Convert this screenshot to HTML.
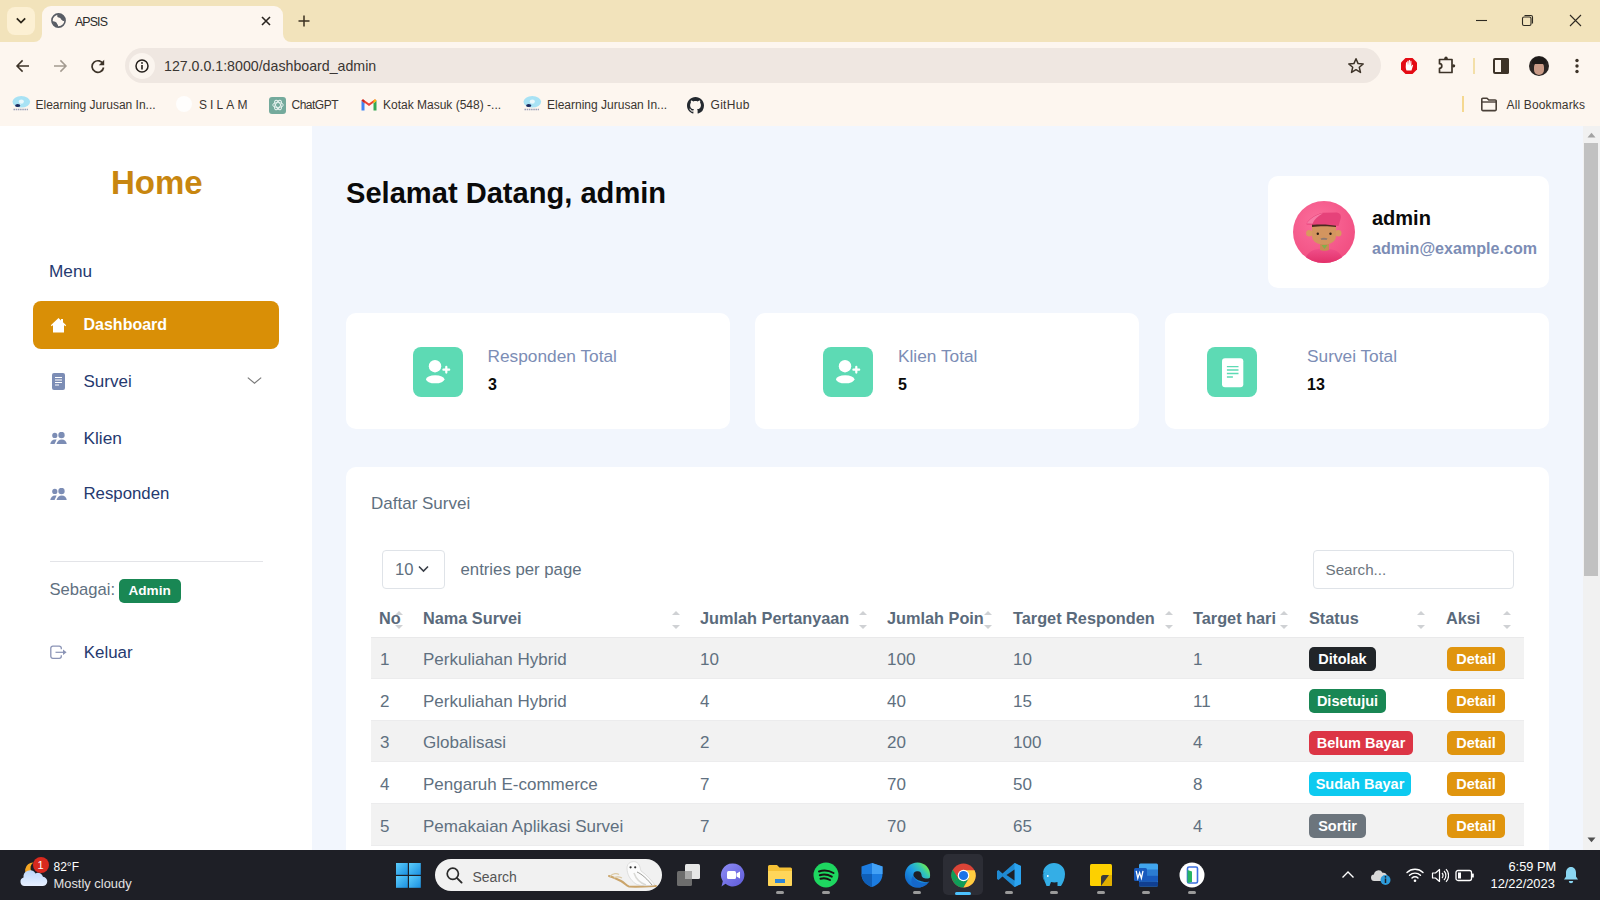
<!DOCTYPE html>
<html><head><meta charset="utf-8">
<style>
*{box-sizing:border-box;margin:0;padding:0}
html,body{width:1600px;height:900px;overflow:hidden;font-family:"Liberation Sans",sans-serif;background:#fdf6ef}
.a{position:absolute}
svg{display:block}
/* chrome */
#tabstrip{left:0;top:0;width:1600px;height:42px;background:#f2e3bb}
#toolbar{left:0;top:42px;width:1600px;height:46px;background:#fdf6ef}
#bookmarks{left:0;top:88px;width:1600px;height:38px;background:#fdf6ef}
.bm{font-size:12px;line-height:1;color:#3a3530;top:98.6px;white-space:nowrap}
/* page */
#page{left:0;top:126px;width:1600px;height:724px;background:#f2f6fd;overflow:hidden}
#sidebar{left:0;top:0;width:312px;height:724px;background:#fff}
.t{line-height:1;white-space:nowrap}
.th{font-size:16.3px;font-weight:bold;color:#5a6a7b}
.td{font-size:17px;color:#607080}
.bdg{height:24px;border-radius:5px;color:#fff;font-weight:bold;font-size:14.5px;line-height:24px;text-align:center;white-space:nowrap}
.srt{width:0;height:0;border-left:4px solid transparent;border-right:4px solid transparent;border-bottom:4px solid #cfd1d4}
.srt2{width:0;height:0;border-left:4px solid transparent;border-right:4px solid transparent;border-top:4px solid #cfd1d4}
.card{background:#fff;border-radius:10px}
#taskbar{left:0;top:850px;width:1600px;height:50px;background:#1e1f26}
</style></head><body>
<!-- TAB STRIP -->
<div id="tabstrip" class="a">
  <div class="a" style="left:42px;top:6px;width:241px;height:36px;background:#fdf6ef;border-radius:9px 9px 0 0"></div>
  <div class="a" style="left:34px;top:34px;width:8px;height:8px;background:#fdf6ef"></div>
  <div class="a" style="left:26px;top:26px;width:16px;height:16px;background:#f2e3bb;border-radius:0 0 8px 0"></div>
  <div class="a" style="left:283px;top:34px;width:8px;height:8px;background:#fdf6ef"></div>
  <div class="a" style="left:283px;top:26px;width:16px;height:16px;background:#f2e3bb;border-radius:0 0 0 8px"></div>
  <div class="a" style="left:7px;top:7px;width:28px;height:28px;border-radius:8px;background:#fcf0d3"></div>
  <svg class="a" style="left:14px;top:14px" width="14" height="14" viewBox="0 0 14 14"><path d="M2.8 4.4L7 8.6L11.2 4.4" fill="none" stroke="#2a2418" stroke-width="1.7"/></svg>
  <svg class="a" style="left:51px;top:13px" width="15" height="15" viewBox="0 0 15 15"><circle cx="7.5" cy="7.5" r="6.6" fill="none" stroke="#595d65" stroke-width="1.6"/><path d="M6.5 1.2C8.5 1 11.5 1.8 13 3.5C13.8 5 13.9 6.8 13.6 8C12.5 8.3 11.3 7.6 10.5 6.8C9.5 6 9.8 5 8.5 4.8C7.4 4.6 6.2 4 6.2 3C6.2 2.2 6.5 1.6 6.5 1.2Z" fill="#595d65"/><path d="M1.2 8C2.5 8.2 4 8.5 5 9.3C6 10 6 11.2 6.8 11.8C7.3 12.3 7 13.3 6.5 14C4 13.5 2 11.5 1.2 8Z" fill="#595d65"/></svg>
  <div class="a t" style="left:75px;top:16px;font-size:12.4px;letter-spacing:-0.9px;color:#2b2b2b">APSIS</div>
  <svg class="a" style="left:260px;top:15px" width="12" height="12" viewBox="0 0 12 12"><path d="M2 2L10 10M10 2L2 10" stroke="#2a2520" stroke-width="1.6"/></svg>
  <svg class="a" style="left:298px;top:15px" width="12" height="12" viewBox="0 0 12 12"><path d="M6 0.5V11.5M0.5 6H11.5" stroke="#3b3020" stroke-width="1.5"/></svg>
  <svg class="a" style="left:1475px;top:14px" width="13" height="13" viewBox="0 0 13 13"><path d="M1 6.5H12" stroke="#2e2a22" stroke-width="1.1"/></svg>
  <svg class="a" style="left:1521px;top:14px" width="13" height="13" viewBox="0 0 13 13"><rect x="1.5" y="3" width="8.5" height="8.5" rx="1.5" fill="none" stroke="#2e2a22" stroke-width="1.1"/><path d="M3.5 1.5H10a1.5 1.5 0 0 1 1.5 1.5V9.5" fill="none" stroke="#2e2a22" stroke-width="1.1"/></svg>
  <svg class="a" style="left:1569px;top:14px" width="13" height="13" viewBox="0 0 13 13"><path d="M1 1L12 12M12 1L1 12" stroke="#2e2a22" stroke-width="1.1"/></svg>
</div>
<!-- TOOLBAR -->
<div id="toolbar" class="a">
  <svg class="a" style="left:14px;top:16px" width="16" height="16" viewBox="0 0 16 16"><path d="M15 8H3.2M8.6 2.4L3 8L8.6 13.6" fill="none" stroke="#3d3328" stroke-width="1.5"/></svg>
  <svg class="a" style="left:52px;top:16px" width="16" height="16" viewBox="0 0 16 16"><path d="M2 8H13.8M8.4 2.4L14 8L8.4 13.6" fill="none" stroke="#a39a90" stroke-width="1.5"/></svg>
  <svg class="a" style="left:90px;top:16px" width="16" height="16" viewBox="0 0 16 16"><path d="M13.3 6.5A5.8 5.8 0 1 0 13.6 9.5" fill="none" stroke="#3d3328" stroke-width="1.7"/><path d="M14.2 1.8V7.2H8.8Z" fill="#3d3328"/></svg>
  <div class="a" style="left:125px;top:6px;width:1256px;height:35px;border-radius:17.5px;background:#efe7e1"></div>
  <div class="a" style="left:129px;top:11px;width:26px;height:26px;border-radius:13px;background:#fbf5ef"></div>
  <svg class="a" style="left:135px;top:17px" width="14" height="14" viewBox="0 0 14 14"><circle cx="7" cy="7" r="6" fill="none" stroke="#231e1a" stroke-width="1.5"/><path d="M7 6V10.5" stroke="#231e1a" stroke-width="1.6"/><circle cx="7" cy="4" r="0.9" fill="#231e1a"/></svg>
  <div class="a t" style="left:164px;top:17.2px;font-size:14.2px;color:#3a3633">127.0.0.1:8000/dashboard_admin</div>
  <svg class="a" style="left:1347px;top:15px" width="18" height="18" viewBox="0 0 18 18"><path d="M9 1.8L11.1 6.6L16.2 7L12.3 10.3L13.5 15.4L9 12.7L4.5 15.4L5.7 10.3L1.8 7L6.9 6.6Z" fill="none" stroke="#3d3328" stroke-width="1.5" stroke-linejoin="round"/></svg>
  <svg class="a" style="left:1400px;top:15px" width="18" height="18" viewBox="0 0 18 18"><path d="M5.5 1H12.5L17 5.5V12.5L12.5 17H5.5L1 12.5V5.5Z" fill="#e40b14"/><path d="M6.5 13.5C5.8 12 5.6 10 5.8 8.5L6 5.5C6.1 5 7 5 7 5.5V8.5L7.4 4C7.5 3.5 8.4 3.5 8.4 4V8.3L8.9 3.4C9 2.9 9.9 2.9 9.9 3.4V8.3L10.4 4.2C10.5 3.7 11.4 3.7 11.4 4.2V9.5L12.2 8C12.5 7.5 13.3 7.8 13.1 8.3L11.5 13.5Z" fill="#fff"/></svg>
  
  <div class="a" style="left:1473px;top:16px;width:2px;height:16px;background:#f3dfa8"></div>
  <svg class="a" style="left:1492px;top:57px;display:none" width="1" height="1"></svg>
  <div class="a" style="left:1493px;top:16px;width:16px;height:16px;border:2px solid #3d3328;border-radius:2px"></div>
  <div class="a" style="left:1501px;top:16px;width:8px;height:16px;background:#3d3328;border-radius:0 2px 2px 0"></div>
  <div class="a" style="left:1529px;top:14px;width:20px;height:20px;border-radius:10px;background:#2a2523;overflow:hidden"><div class="a" style="left:5px;top:6px;width:10px;height:13px;border-radius:5px;background:#c99a86"></div><div class="a" style="left:3px;top:1px;width:14px;height:7px;border-radius:7px 7px 2px 2px;background:#1e1a18"></div></div>
  <svg class="a" style="left:1573px;top:15px" width="8" height="18" viewBox="0 0 8 18"><circle cx="4" cy="3.5" r="1.7" fill="#3d3328"/><circle cx="4" cy="9" r="1.7" fill="#3d3328"/><circle cx="4" cy="14.5" r="1.7" fill="#3d3328"/></svg>
</div>
<svg class="a" style="left:1437px;top:55px" width="20" height="20" viewBox="0 0 20 20"><path d="M2.5 4.5H15V17.5H2.5V13.3A2.3 2.3 0 0 0 2.5 8.7Z" fill="none" stroke="#3d3328" stroke-width="1.7" stroke-linejoin="round"/><circle cx="9" cy="3.3" r="1.7" fill="#3d3328"/><circle cx="16.6" cy="10.8" r="1.6" fill="#3d3328"/></svg>
<!-- BOOKMARKS -->
<div id="bookmarks" class="a"></div>
<div class="a bm" style="left:35.5px">Elearning Jurusan In...</div>
<div class="a bm" style="left:199px;letter-spacing:3.1px">SILAM</div>
<div class="a bm" style="left:291.5px;letter-spacing:-0.5px">ChatGPT</div>
<div class="a bm" style="left:383px">Kotak Masuk (548) -...</div>
<div class="a bm" style="left:547px">Elearning Jurusan In...</div>
<div class="a bm" style="left:710.5px;letter-spacing:0.3px">GitHub</div>
<div class="a bm" style="left:1506.5px;letter-spacing:0.15px">All Bookmarks</div>
<svg class="a" style="left:11px;top:95px" width="20" height="18" viewBox="0 0 20 18"><ellipse cx="10.3" cy="6.8" rx="8.8" ry="5.8" fill="#a8e2f4"/><ellipse cx="10.3" cy="6.6" rx="2.6" ry="2.2" fill="#eaf8fc"/><path d="M9.5 8.5C10 10 9 11.8 7 11.5L8.5 10.5Z" fill="#eaf8fc"/><ellipse cx="6.7" cy="10.6" rx="2.6" ry="1.5" fill="#1b2a5e"/><path d="M2.5 14.5H17" stroke="#9aa0b8" stroke-width="1.3" stroke-dasharray="1.5 0.7"/></svg>
<div class="a" style="left:176px;top:96px;width:16px;height:16px;border-radius:8px;background:#fff;opacity:.85"></div>
<div class="a" style="left:269px;top:96.5px;width:17px;height:17px;border-radius:3px;background:#74aa9c"></div>
<svg class="a" style="left:270.5px;top:98px" width="14" height="14" viewBox="0 0 14 14"><g fill="none" stroke="#e8f3f0" stroke-width="0.9"><ellipse cx="7" cy="7" rx="5.2" ry="2.4"/><ellipse cx="7" cy="7" rx="5.2" ry="2.4" transform="rotate(60 7 7)"/><ellipse cx="7" cy="7" rx="5.2" ry="2.4" transform="rotate(120 7 7)"/></g></svg>
<svg class="a" style="left:361px;top:99px" width="16" height="12" viewBox="0 0 16 12"><path d="M0.5 1.5V11.5H3.5V4.5Z" fill="#4285f4"/><path d="M12.5 4.5V11.5H15.5V1.5Z" fill="#34a853"/><path d="M0.5 1.5L8 7L15.5 1.5L14 0.3L8 4.6L2 0.3Z" fill="#ea4335"/><path d="M12.5 4.5L15.5 1.5L14 0.3L12.5 1.4Z" fill="#fbbc04"/><path d="M3.5 4.5L0.5 1.5L2 0.3L3.5 1.4Z" fill="#c5221f"/></svg>
<svg class="a" style="left:522px;top:95px" width="20" height="18" viewBox="0 0 20 18"><ellipse cx="10.3" cy="6.8" rx="8.8" ry="5.8" fill="#a8e2f4"/><ellipse cx="10.3" cy="6.6" rx="2.6" ry="2.2" fill="#eaf8fc"/><ellipse cx="6.7" cy="10.6" rx="2.6" ry="1.5" fill="#1b2a5e"/><path d="M2.5 14.5H17" stroke="#9aa0b8" stroke-width="1.3" stroke-dasharray="1.5 0.7"/></svg>
<svg class="a" style="left:687px;top:96.5px" width="17" height="17" viewBox="0 0 16 16"><path fill="#24292f" d="M8 0C3.58 0 0 3.58 0 8c0 3.54 2.29 6.53 5.47 7.59.4.07.55-.17.55-.38 0-.19-.01-.82-.01-1.49-2.01.37-2.53-.49-2.69-.94-.09-.23-.48-.94-.82-1.13-.28-.15-.68-.52-.01-.53.63-.01 1.08.58 1.23.82.72 1.21 1.87.87 2.33.66.07-.52.28-.87.51-1.07-1.78-.2-3.640-.89-3.64-3.95 0-.87.31-1.59.82-2.15-.08-.2-.36-1.02.08-2.12 0 0 .67-.21 2.2.82.64-.18 1.320-.27 2-.27.68 0 1.36.09 2 .27 1.53-1.04 2.2-.82 2.2-.82.44 1.1.16 1.92.08 2.12.51.56.82 1.27.82 2.15 0 3.070-1.87 3.75-3.65 3.95.29.25.54.73.54 1.48 0 1.07-.01 1.93-.01 2.2 0 .21.15.46.55.38A8.013 8.013 0 0016 8c0-4.42-3.58-8-8-8z"/></svg>
<div class="a" style="left:1462px;top:96px;width:2px;height:16px;background:#f5d890"></div>
<svg class="a" style="left:1480px;top:97px" width="18" height="15" viewBox="0 0 18 15"><path d="M1.8 2.2a1 1 0 0 1 1-1H7L8.8 3H15.2a1 1 0 0 1 1 1V12.6a1 1 0 0 1-1 1H2.8a1 1 0 0 1-1-1Z" fill="none" stroke="#4a4038" stroke-width="1.6" stroke-linejoin="round"/><path d="M1.8 5H16.2" stroke="#4a4038" stroke-width="1.4"/></svg>
<!-- PAGE -->
<div id="page" class="a"></div>
<div id="sidebar" class="a" style="left:0;top:126px;width:312px;height:724px;background:#fff"></div>
<div class="a t" style="left:111px;top:166.3px;font-size:33px;font-weight:bold;color:#c8860f">Home</div>
<div class="a t" style="left:49px;top:262.8px;font-size:17.2px;color:#25396f">Menu</div>
<div class="a" style="left:33px;top:301px;width:246px;height:48px;border-radius:8px;background:#d98f06"></div>
<svg class="a" style="left:50px;top:317px" width="17" height="16" viewBox="0 0 17 16"><path d="M8.5 1L0.8 8.2L1.8 9.2L3 8.1V15.5H14V8.1L15.2 9.2L16.2 8.2L13 5.2V2H11V3.4Z" fill="#fff"/></svg>
<div class="a t" style="left:83.5px;top:316.5px;font-size:16px;font-weight:bold;color:#fff">Dashboard</div>
<svg class="a" style="left:52px;top:373px" width="13" height="17" viewBox="0 0 13 17"><rect x="0" y="0" width="13" height="17" rx="2" fill="#7c8db5"/><path d="M3 4.5H10M3 7H10M3 9.5H10M3 12H7" stroke="#fff" stroke-width="1.1"/></svg>
<div class="a t" style="left:83.5px;top:372.8px;font-size:17px;color:#25396f">Survei</div>
<svg class="a" style="left:247px;top:377px" width="15" height="7" viewBox="0 0 15 7"><path d="M0.8 0.6L7.5 6.2L14.2 0.6" fill="none" stroke="#7a7a7a" stroke-width="1.2"/></svg>
<svg class="a" style="left:50px;top:432px" width="17" height="12" viewBox="0 0 17 12"><circle cx="4.8" cy="3.4" r="2.6" fill="#7c8db5"/><circle cx="11.5" cy="3" r="3.2" fill="#7c8db5"/><path d="M0.2 12.2C0.5 9.5 2.5 7.4 5 7.4H6.6L4.5 12.2Z" fill="#7c8db5"/><path d="M6.4 12.2C7 9.3 9 7.4 11.8 7.4C14.6 7.4 16.5 9.3 16.8 12.2Z" fill="#7c8db5"/></svg>
<div class="a t" style="left:83.5px;top:430.4px;font-size:17.3px;color:#25396f">Klien</div>
<svg class="a" style="left:50px;top:488px" width="17" height="12" viewBox="0 0 17 12"><circle cx="4.8" cy="3.4" r="2.6" fill="#7c8db5"/><circle cx="11.5" cy="3" r="3.2" fill="#7c8db5"/><path d="M0.2 12.2C0.5 9.5 2.5 7.4 5 7.4H6.6L4.5 12.2Z" fill="#7c8db5"/><path d="M6.4 12.2C7 9.3 9 7.4 11.8 7.4C14.6 7.4 16.5 9.3 16.8 12.2Z" fill="#7c8db5"/></svg>
<div class="a t" style="left:83.5px;top:486.3px;font-size:16.8px;color:#25396f">Responden</div>
<div class="a" style="left:50px;top:561px;width:213px;height:1px;background:#e3e4e8"></div>
<div class="a t" style="left:49.5px;top:582.3px;font-size:16.6px;color:#607080">Sebagai:</div>
<div class="a" style="left:119px;top:579px;width:62px;height:24px;border-radius:5px;background:#198754"></div>
<div class="a t" style="left:128.5px;top:584.4px;font-size:13.6px;font-weight:bold;color:#fff">Admin</div>
<svg class="a" style="left:50px;top:645px" width="17" height="14" viewBox="0 0 17 14"><path d="M11.3 4.3V3.2A2 2 0 0 0 9.3 1.2H2.8A2 2 0 0 0 0.8 3.2V11.3A2 2 0 0 0 2.8 13.3H9.3A2 2 0 0 0 11.3 11.3V10.2" fill="none" stroke="#8a93b5" stroke-width="1.3"/><path d="M5.5 7.3H13.5" stroke="#8a93b5" stroke-width="1.2"/><path d="M13 4.6L16.6 7.3L13 10Z" fill="#8a93b5"/></svg>
<div class="a t" style="left:83.8px;top:644.8px;font-size:16.9px;color:#25396f">Keluar</div>

<div class="a t" style="left:346px;top:179.3px;font-size:29.1px;font-weight:bold;color:#0a0a0a">Selamat Datang, admin</div>
<div class="a card" style="left:1268px;top:176px;width:281px;height:112px"></div>
<div class="a t" style="left:1372px;top:207.8px;font-size:20px;font-weight:bold;color:#0a0a0a">admin</div>
<div class="a t" style="left:1372px;top:240px;font-size:16.1px;font-weight:bold;color:#7c8db5">admin@example.com</div>

<div class="a card" style="left:346px;top:313px;width:384px;height:116px"></div>
<div class="a card" style="left:755px;top:313px;width:384px;height:116px"></div>
<div class="a card" style="left:1165px;top:313px;width:384px;height:116px"></div>
<div class="a" style="left:413px;top:347px;width:50px;height:50px;border-radius:8px;background:#5ddab4"></div>
<div class="a" style="left:823px;top:347px;width:50px;height:50px;border-radius:8px;background:#5ddab4"></div>
<div class="a" style="left:1207px;top:347px;width:50px;height:50px;border-radius:8px;background:#5ddab4"></div>
<svg class="a" style="left:413px;top:347px" width="50" height="50" viewBox="0 0 50 50"><circle cx="22" cy="19.2" r="6.2" fill="#fff"/><ellipse cx="22.2" cy="32.3" rx="9.2" ry="4" fill="#fff"/><path d="M33.3 19.8V25.6M30.4 22.7H36.2" stroke="#fff" stroke-width="2.2" stroke-linecap="round"/></svg>
<svg class="a" style="left:823px;top:347px" width="50" height="50" viewBox="0 0 50 50"><circle cx="22" cy="19.2" r="6.2" fill="#fff"/><ellipse cx="22.2" cy="32.3" rx="9.2" ry="4" fill="#fff"/><path d="M33.3 19.8V25.6M30.4 22.7H36.2" stroke="#fff" stroke-width="2.2" stroke-linecap="round"/></svg>
<svg class="a" style="left:1207px;top:347px" width="50" height="50" viewBox="0 0 50 50"><rect x="15" y="11.3" width="21.3" height="29" rx="3" fill="#fff"/><path d="M19.9 19.6H31.5M19.9 23H31.5M19.9 26.5H31.5M19.9 30H25.9" stroke="#5ddab4" stroke-width="1.3"/></svg>
<svg class="a" style="left:1293px;top:201px" width="62" height="62" viewBox="0 0 62 62"><defs><clipPath id="avc"><circle cx="31" cy="31" r="31"/></clipPath><radialGradient id="avg" cx="0.4" cy="0.35" r="0.75"><stop offset="0" stop-color="#fb6f9c"/><stop offset="1" stop-color="#f04b7f"/></radialGradient><linearGradient id="bod" x1="0" y1="0" x2="0" y2="1"><stop offset="0" stop-color="#f0508a"/><stop offset="1" stop-color="#e2306a"/></linearGradient></defs><g clip-path="url(#avc)"><rect width="62" height="62" fill="url(#avg)"/><path d="M12 62C12 52 19 47.5 31 47.5C43 47.5 50 52 50 62Z" fill="url(#bod)"/><path d="M27 38H36V49C34 50 29 50 27 49Z" fill="#c98a55"/><path d="M28.5 44L31.5 48L34.5 44Z" fill="#7fb04a"/><circle cx="16.3" cy="32.3" r="3.2" fill="#d8995f"/><circle cx="45.3" cy="32.3" r="3.2" fill="#d8995f"/><path d="M19 24H43V35C43 40 38 43.5 31 43.5C24 43.5 19 40 19 35Z" fill="#d3955f"/><path d="M19 23H43V26C36 25 26 25 19 26Z" fill="#4a2a20"/><circle cx="24.8" cy="32.8" r="1.2" fill="#2a1a14"/><circle cx="37.5" cy="32.8" r="1.2" fill="#2a1a14"/><path d="M27.5 37.5C29.5 36.5 32.5 36.5 34.5 37.5L33.5 39C32 38.5 30 38.5 28.5 39Z" fill="#8d7a70"/><path d="M13.6 22.2C17 17 23 13 30 11.7L44 11.5C47 12 48.3 14 47.8 17L45.5 25C38 23.5 28 23 20.5 23.7L13.6 23.6Z" fill="#e6427a"/><path d="M13.6 22.5C17 17.5 23 13.5 30 12.2C25 15 21 18.5 19.5 22.8Z" fill="#f77aa5"/></g></svg>
<div class="a t" style="left:487.5px;top:348.2px;font-size:17.3px;color:#7c8db5">Responden Total</div>
<div class="a t" style="left:898px;top:348.2px;font-size:17.3px;color:#7c8db5">Klien Total</div>
<div class="a t" style="left:1307px;top:348.2px;font-size:17.3px;color:#7c8db5">Survei Total</div>
<div class="a t" style="left:488px;top:377.3px;font-size:16px;font-weight:bold;color:#0a0a0a">3</div>
<div class="a t" style="left:898px;top:377.3px;font-size:16px;font-weight:bold;color:#0a0a0a">5</div>
<div class="a t" style="left:1307px;top:377.3px;font-size:16px;font-weight:bold;color:#0a0a0a">13</div>

<div class="a card" style="left:346px;top:467px;width:1203px;height:500px"></div>
<div class="a t" style="left:371px;top:495.2px;font-size:17px;color:#607080">Daftar Survei</div>
<div class="a" style="left:382px;top:550px;width:63px;height:39px;border:1px solid #dfe3e8;border-radius:4px"></div>
<div class="a t" style="left:395px;top:562.4px;font-size:16.6px;color:#607080">10</div>
<svg class="a" style="left:418px;top:565px" width="11" height="8" viewBox="0 0 11 8"><path d="M1 1.5L5.5 6L10 1.5" fill="none" stroke="#3a3f48" stroke-width="1.6"/></svg>
<div class="a t" style="left:460.5px;top:562.4px;font-size:16.75px;color:#607080">entries per page</div>
<div class="a" style="left:1313px;top:550px;width:201px;height:39px;border:1px solid #dfe3e8;border-radius:4px"></div>
<div class="a t" style="left:1325.5px;top:561.6px;font-size:15.2px;color:#6c757d">Search...</div>
<!-- TABLE -->
<div class="a t th" style="left:379px;top:609.6px">No</div>
<div class="a srt" style="left:395px;top:611px"></div><div class="a srt2" style="left:395px;top:625px"></div>
<div class="a t th" style="left:423px;top:609.6px">Nama Survei</div>
<div class="a srt" style="left:672px;top:611px"></div><div class="a srt2" style="left:672px;top:625px"></div>
<div class="a t th" style="left:700px;top:609.6px">Jumlah Pertanyaan</div>
<div class="a srt" style="left:859px;top:611px"></div><div class="a srt2" style="left:859px;top:625px"></div>
<div class="a t th" style="left:887px;top:609.6px">Jumlah Poin</div>
<div class="a srt" style="left:984px;top:611px"></div><div class="a srt2" style="left:984px;top:625px"></div>
<div class="a t th" style="left:1013px;top:609.6px">Target Responden</div>
<div class="a srt" style="left:1165px;top:611px"></div><div class="a srt2" style="left:1165px;top:625px"></div>
<div class="a t th" style="left:1193px;top:609.6px">Target hari</div>
<div class="a srt" style="left:1280px;top:611px"></div><div class="a srt2" style="left:1280px;top:625px"></div>
<div class="a t th" style="left:1309px;top:609.6px">Status</div>
<div class="a srt" style="left:1417px;top:611px"></div><div class="a srt2" style="left:1417px;top:625px"></div>
<div class="a t th" style="left:1446px;top:609.6px">Aksi</div>
<div class="a srt" style="left:1503px;top:611px"></div><div class="a srt2" style="left:1503px;top:625px"></div>

<div class="a" style="left:371px;top:637.0px;width:1153px;height:41.8px;background:#f2f2f2"></div>
<div class="a t td" style="left:380px;top:650.7px">1</div>
<div class="a t td" style="left:423px;top:650.7px">Perkuliahan Hybrid</div>
<div class="a t td" style="left:700px;top:650.7px">10</div>
<div class="a t td" style="left:887px;top:650.7px">100</div>
<div class="a t td" style="left:1013px;top:650.7px">10</div>
<div class="a t td" style="left:1193px;top:650.7px">1</div>
<div class="a bdg" style="left:1309px;top:647.0px;width:67px;background:#212529">Ditolak</div>
<div class="a bdg" style="left:1447px;top:647.0px;width:58px;background:#e0950e">Detail</div>
<div class="a t td" style="left:380px;top:692.5px">2</div>
<div class="a t td" style="left:423px;top:692.5px">Perkuliahan Hybrid</div>
<div class="a t td" style="left:700px;top:692.5px">4</div>
<div class="a t td" style="left:887px;top:692.5px">40</div>
<div class="a t td" style="left:1013px;top:692.5px">15</div>
<div class="a t td" style="left:1193px;top:692.5px">11</div>
<div class="a bdg" style="left:1309px;top:688.8px;width:77px;background:#198754">Disetujui</div>
<div class="a bdg" style="left:1447px;top:688.8px;width:58px;background:#e0950e">Detail</div>
<div class="a" style="left:371px;top:720.6px;width:1153px;height:41.8px;background:#f2f2f2"></div>
<div class="a t td" style="left:380px;top:734.3px">3</div>
<div class="a t td" style="left:423px;top:734.3px">Globalisasi</div>
<div class="a t td" style="left:700px;top:734.3px">2</div>
<div class="a t td" style="left:887px;top:734.3px">20</div>
<div class="a t td" style="left:1013px;top:734.3px">100</div>
<div class="a t td" style="left:1193px;top:734.3px">4</div>
<div class="a bdg" style="left:1309px;top:730.6px;width:104px;background:#dc3545">Belum Bayar</div>
<div class="a bdg" style="left:1447px;top:730.6px;width:58px;background:#e0950e">Detail</div>
<div class="a t td" style="left:380px;top:776.1px">4</div>
<div class="a t td" style="left:423px;top:776.1px">Pengaruh E-commerce</div>
<div class="a t td" style="left:700px;top:776.1px">7</div>
<div class="a t td" style="left:887px;top:776.1px">70</div>
<div class="a t td" style="left:1013px;top:776.1px">50</div>
<div class="a t td" style="left:1193px;top:776.1px">8</div>
<div class="a bdg" style="left:1309px;top:772.4px;width:102px;background:#0dcaf0">Sudah Bayar</div>
<div class="a bdg" style="left:1447px;top:772.4px;width:58px;background:#e0950e">Detail</div>
<div class="a" style="left:371px;top:804.2px;width:1153px;height:41.8px;background:#f2f2f2"></div>
<div class="a t td" style="left:380px;top:817.9px">5</div>
<div class="a t td" style="left:423px;top:817.9px">Pemakaian Aplikasi Survei</div>
<div class="a t td" style="left:700px;top:817.9px">7</div>
<div class="a t td" style="left:887px;top:817.9px">70</div>
<div class="a t td" style="left:1013px;top:817.9px">65</div>
<div class="a t td" style="left:1193px;top:817.9px">4</div>
<div class="a bdg" style="left:1309px;top:814.2px;width:57px;background:#6c757d">Sortir</div>
<div class="a bdg" style="left:1447px;top:814.2px;width:58px;background:#e0950e">Detail</div>

<div class="a" style="left:371px;top:637px;width:1153px;height:1px;background:#e9e9ea"></div>
<div class="a" style="left:371px;top:677.8px;width:1153px;height:1px;background:#ececed"></div>
<div class="a" style="left:371px;top:719.6px;width:1153px;height:1px;background:#ececed"></div>
<div class="a" style="left:371px;top:761.4px;width:1153px;height:1px;background:#ececed"></div>
<div class="a" style="left:371px;top:803.2px;width:1153px;height:1px;background:#ececed"></div>
<div class="a" style="left:371px;top:845.0px;width:1153px;height:1px;background:#ececed"></div>
<!-- SCROLLBAR -->
<div class="a" style="left:1583px;top:126px;width:17px;height:724px;background:#f1f1f1"></div>
<div class="a" style="left:1584px;top:143px;width:14px;height:433px;background:#c1c1c1"></div>
<svg class="a" style="left:1587px;top:132px" width="9" height="6" viewBox="0 0 9 6"><path d="M0.5 5.5L4.5 0.8L8.5 5.5Z" fill="#a3a3a3"/></svg>
<svg class="a" style="left:1587px;top:837px" width="9" height="6" viewBox="0 0 9 6"><path d="M0.5 0.5L4.5 5.2L8.5 0.5Z" fill="#505050"/></svg>
<!-- TASKBAR -->
<div id="taskbar" class="a"></div>
<!-- weather -->
<svg class="a" style="left:18px;top:858px" width="32" height="32" viewBox="0 0 32 32"><path d="M15.5 4.5A8 8 0 1 0 22.5 15.5A6.5 6.5 0 0 1 15.5 4.5Z" fill="#f5a623"/><defs><linearGradient id="cld" x1="0" y1="0" x2="0" y2="1"><stop offset="0" stop-color="#bcd7fb"/><stop offset="1" stop-color="#e8f0ff"/></linearGradient></defs><path d="M6.5 28A4.3 4.3 0 0 1 5.5 19.6A6.5 6.5 0 0 1 17.5 15.5A5.2 5.2 0 0 1 25 18.8A4.6 4.6 0 0 1 24.3 28Z" fill="url(#cld)"/></svg>
<div class="a" style="left:33px;top:857px;width:16px;height:16px;border-radius:8px;background:#d9291e"></div>
<div class="a t" style="left:37.5px;top:859.5px;font-size:11px;color:#fff">1</div>
<div class="a t" style="left:53.5px;top:860.5px;font-size:12px;color:#fff">82°F</div>
<div class="a t" style="left:53.5px;top:877.6px;font-size:12.9px;color:#e2e2e2">Mostly cloudy</div>
<!-- start -->
<svg class="a" style="left:395.5px;top:863px" width="25" height="25" viewBox="0 0 25 25"><defs><linearGradient id="wg" x1="0" y1="0" x2="1" y2="1"><stop offset="0" stop-color="#5ccdfc"/><stop offset="1" stop-color="#1a8fe0"/></linearGradient></defs><rect x="0" y="0" width="11.8" height="11.8" fill="url(#wg)"/><rect x="13" y="0" width="11.8" height="11.8" fill="url(#wg)"/><rect x="0" y="13" width="11.8" height="11.8" fill="url(#wg)"/><rect x="13" y="13" width="11.8" height="11.8" fill="url(#wg)"/></svg>
<div class="a" style="left:435px;top:859px;width:227px;height:32px;border-radius:16px;background:#f1f1f1"></div>
<svg class="a" style="left:446px;top:867px" width="17" height="17" viewBox="0 0 17 17"><circle cx="6.8" cy="6.8" r="5.6" fill="none" stroke="#2a2a2a" stroke-width="1.7"/><path d="M10.8 10.8L15.6 15.6" stroke="#2a2a2a" stroke-width="1.9" stroke-linecap="round"/></svg>
<div class="a t" style="left:472.5px;top:869.5px;font-size:14px;color:#555">Search</div>
<svg class="a" style="left:600px;top:858px" width="64" height="34" viewBox="0 0 64 34"><path d="M9 18C13 19 17 21 21 23C25 25 26 28 29 28.5C37 29 46 28.5 56 28" stroke="#caa46a" stroke-width="2" fill="none" stroke-linecap="round"/><path d="M10 18.5C13 15 17 15 19 16.5M14 20C17 18 19 18.5 22 20" stroke="#dccaa5" stroke-width="1.3" fill="none"/><path d="M27 10C27 4 33 3 36 4C40 6 40 10 41 13C47 17 51 22 55 27C48 28 40 28 36 26C30 22 27 16 27 10Z" fill="#fbfbfb" stroke="#cfcfcc" stroke-width="0.6"/><path d="M37 14C42 16 48 22 52 27" stroke="#9c9c98" stroke-width="1" fill="none"/><path d="M34 15C36 21 40 25 46 27" stroke="#dadad6" stroke-width="1.6" fill="none"/><circle cx="30.6" cy="9.3" r="1.1" fill="#333"/><circle cx="35.2" cy="9.3" r="1.1" fill="#333"/></svg>
<!-- task view -->
<svg class="a" style="left:676px;top:862px" width="26" height="26" viewBox="0 0 26 26"><rect x="1" y="9" width="15" height="15" rx="1.5" fill="#6d6d6d"/><rect x="9" y="2" width="15" height="15" rx="1.5" fill="#e6e6e6"/><rect x="9" y="9" width="7" height="8" fill="#a8a8a8"/></svg>
<!-- chat -->
<svg class="a" style="left:720px;top:862px" width="26" height="26" viewBox="0 0 26 26"><defs><linearGradient id="chg" x1="0" y1="0" x2="1" y2="1"><stop offset="0" stop-color="#8e8cf5"/><stop offset="1" stop-color="#5e5bd8"/></linearGradient></defs><path d="M13 1.5A11.5 11.5 0 1 1 5.5 21.8L1.5 24.5L2.8 19.2A11.5 11.5 0 0 1 13 1.5Z" fill="url(#chg)"/><rect x="7" y="9" width="9" height="8" rx="1.5" fill="#fff"/><path d="M16.5 11.5L20 9.5V16.5L16.5 14.5Z" fill="#fff"/></svg>
<!-- folder -->
<svg class="a" style="left:767px;top:862px" width="26" height="26" viewBox="0 0 26 26"><path d="M1 4.5a1.5 1.5 0 0 1 1.5-1.5H10L12.5 5.5H23.5A1.5 1.5 0 0 1 25 7V22.5A1.5 1.5 0 0 1 23.5 24H2.5A1.5 1.5 0 0 1 1 22.5Z" fill="#f5c136"/><path d="M1 9H25V22.5A1.5 1.5 0 0 1 23.5 24H2.5A1.5 1.5 0 0 1 1 22.5Z" fill="#ffd65a"/><rect x="8" y="17" width="10" height="4" fill="#2f86d6"/></svg>
<div class="a" style="left:776px;top:891px;width:8px;height:3px;border-radius:2px;background:#9a9a9a"></div>
<!-- spotify -->
<svg class="a" style="left:813px;top:862px" width="26" height="26" viewBox="0 0 26 26"><circle cx="13" cy="13" r="12.5" fill="#1ed760"/><path d="M6 9.5C10.5 8 16 8.5 20.5 11M6.8 13.2C10.5 12 15 12.5 18.8 14.6M7.5 16.8C10.5 16 14 16.3 17 18" stroke="#191414" stroke-width="2" stroke-linecap="round" fill="none"/></svg>
<div class="a" style="left:822px;top:891px;width:8px;height:3px;border-radius:2px;background:#9a9a9a"></div>
<!-- defender -->
<svg class="a" style="left:859px;top:862px" width="26" height="26" viewBox="0 0 26 26"><path d="M13 1L23.5 4.5V12C23.5 18.5 19 23 13 25C7 23 2.5 18.5 2.5 12V4.5Z" fill="#1c7ce0"/><path d="M13 1L23.5 4.5V12H13Z" fill="#43a1f5"/><path d="M2.5 12H13V25C7 23 2.5 18.5 2.5 12Z" fill="#0f5fb8"/></svg>
<!-- edge -->
<svg class="a" style="left:904px;top:861px" width="28" height="28" viewBox="0 0 28 28"><defs><linearGradient id="edg" x1="0.1" y1="0.9" x2="0.9" y2="0.2"><stop offset="0" stop-color="#0f62c8"/><stop offset="0.5" stop-color="#1e9be6"/><stop offset="0.8" stop-color="#35c9b0"/><stop offset="1" stop-color="#6ae85a"/></linearGradient></defs><circle cx="13.5" cy="14" r="12.6" fill="url(#edg)"/><path d="M9.5 15A4 4 0 0 1 17.5 13.5C17.5 16.5 20 17.5 22.5 17.5C24.5 17.5 26 17 26.5 16.5L26.8 19.5C24.5 21.5 21 21.5 18.5 20.5C15.5 19.5 12 19 9.5 15Z" fill="#1e1f26"/><path d="M9 15C11.5 20 16 21.5 20 21.5C22.5 21.5 24.5 21 25.5 20.2C23.5 24 19 26.5 14 26.5C11 26.5 8.5 25 7.5 22C7 19.5 7.5 17 9 15Z" fill="#1565c8" opacity="0.9"/></svg>
<div class="a" style="left:913px;top:891px;width:8px;height:3px;border-radius:2px;background:#9a9a9a"></div>
<!-- chrome active -->
<div class="a" style="left:943px;top:854px;width:40px;height:41px;border-radius:5px;background:#2c2d35"></div>
<svg class="a" style="left:950.5px;top:862.5px" width="25" height="25" viewBox="0 0 26 26"><circle cx="13" cy="13" r="12.5" fill="#db4437"/><path d="M13 13L2.2 19.25A12.5 12.5 0 0 0 13 25.5L19.2 14.75Z" fill="#0f9d58"/><path d="M2.2 19.25A12.5 12.5 0 0 1 1.7 6.8L7.6 16.1Z" fill="#0f9d58"/><path d="M13 7.5H24.5A12.5 12.5 0 0 1 13 25.5L18.5 16Z" fill="#ffcd40"/><circle cx="13" cy="13" r="6" fill="#fff"/><circle cx="13" cy="13" r="4.8" fill="#1a73e8"/></svg>
<div class="a" style="left:955px;top:892px;width:16px;height:3px;border-radius:2px;background:#4cc2ff"></div>
<!-- vscode -->
<svg class="a" style="left:996px;top:862px" width="26" height="26" viewBox="0 0 26 26"><path d="M18.5 1L25 4V22L18.5 25L6.5 14.5L2.5 18L1 17V9L2.5 8L6.5 11.5Z" fill="#1f8ad2"/><path d="M18.5 1L25 4V22L18.5 25Z" fill="#2ba3ef"/><path d="M18.5 7.5L10.5 13L18.5 18.5Z" fill="#1e1f26"/></svg>
<div class="a" style="left:1005px;top:891px;width:8px;height:3px;border-radius:2px;background:#9a9a9a"></div>
<!-- pgadmin elephant -->
<svg class="a" style="left:1041px;top:862px" width="26" height="26" viewBox="0 0 26 26"><path d="M13 1C19 1 24 5 24 12C24 17 22 21 20 24H16.5V20C15 20.5 12 20.5 10 20L8.5 24H5.5C4.5 21 2 17 2 12C2 5 7 1 13 1Z" fill="#34aee6"/><circle cx="6.8" cy="14" r="0.9" fill="#fff"/><path d="M3 10C1.5 13 2 17 4 19" stroke="#1e7fb0" stroke-width="1" fill="none"/></svg>
<div class="a" style="left:1050px;top:891px;width:8px;height:3px;border-radius:2px;background:#9a9a9a"></div>
<!-- sticky -->
<svg class="a" style="left:1089px;top:863px" width="24" height="24" viewBox="0 0 24 24"><rect x="1" y="1" width="22" height="22" rx="1.5" fill="#fdd000"/><path d="M12 23V14.5A2.5 2.5 0 0 1 14.5 12H23V21.5A1.5 1.5 0 0 1 21.5 23Z" fill="#e2b000"/><path d="M12 23V14.5A2.5 2.5 0 0 1 14.5 12H20Z" fill="#3a3a3a"/></svg>
<div class="a" style="left:1097px;top:891px;width:8px;height:3px;border-radius:2px;background:#9a9a9a"></div>
<!-- word -->
<svg class="a" style="left:1133px;top:862px" width="26" height="26" viewBox="0 0 26 26"><rect x="6" y="1.5" width="19" height="23" rx="1.5" fill="#41a5ee"/><rect x="6" y="7.5" width="19" height="6" fill="#2b7cd3"/><rect x="6" y="13.5" width="19" height="6" fill="#185abd"/><rect x="6" y="19.5" width="19" height="5" rx="1" fill="#103f91"/><rect x="1" y="6" width="13" height="13" rx="1.5" fill="#185abd"/><path d="M3.2 8.8L4.8 16.2L6.6 10.6L8.4 16.2L10 8.8" stroke="#fff" stroke-width="1.3" fill="none"/></svg>
<div class="a" style="left:1142px;top:891px;width:8px;height:3px;border-radius:2px;background:#9a9a9a"></div>
<!-- phone link -->
<svg class="a" style="left:1179px;top:862px" width="26" height="26" viewBox="0 0 26 26"><circle cx="13" cy="13" r="12.5" fill="#fff"/><rect x="8.5" y="5" width="10" height="16" rx="1.5" fill="none" stroke="#3b6fe0" stroke-width="1.6"/><path d="M8.5 8L13 9.5V20L8.5 21Z" fill="#28b463"/></svg>
<div class="a" style="left:1188px;top:891px;width:8px;height:3px;border-radius:2px;background:#9a9a9a"></div>
<!-- tray -->
<svg class="a" style="left:1341px;top:870px" width="14" height="9" viewBox="0 0 14 9"><path d="M1.5 7.5L7 2L12.5 7.5" stroke="#fff" stroke-width="1.4" fill="none"/></svg>
<svg class="a" style="left:1371px;top:867px" width="22" height="19" viewBox="0 0 22 19"><path d="M3.5 14A3.2 3.2 0 0 1 3 7.6A4.5 4.5 0 0 1 11.5 5.8A3.5 3.5 0 0 1 16 9.5L15 14Z" fill="#d8d8d8"/><circle cx="14.5" cy="13" r="5" fill="#2d9cdb"/><path d="M14.5 11.5V16" stroke="#1e1f26" stroke-width="1.5"/><circle cx="14.5" cy="9.8" r="0.9" fill="#1e1f26"/></svg>
<svg class="a" style="left:1406px;top:867px" width="18" height="16" viewBox="0 0 18 16"><path d="M1 5.5A11.5 11.5 0 0 1 17 5.5M3.5 8.3A8 8 0 0 1 14.5 8.3M6 11A4.2 4.2 0 0 1 12 11" stroke="#fff" stroke-width="1.4" fill="none" stroke-linecap="round"/><circle cx="9" cy="13.8" r="1.3" fill="#fff"/></svg>
<svg class="a" style="left:1431px;top:867px" width="18" height="17" viewBox="0 0 18 17"><path d="M1.5 6H4.5L8.5 2.5V14.5L4.5 11H1.5Z" stroke="#fff" stroke-width="1.2" fill="none" stroke-linejoin="round"/><path d="M11 6A3.5 3.5 0 0 1 11 11M13 4A6.3 6.3 0 0 1 13 13M15 2.2A9 9 0 0 1 15 14.8" stroke="#fff" stroke-width="1.2" fill="none"/></svg>
<svg class="a" style="left:1455px;top:869px" width="20" height="13" viewBox="0 0 20 13"><rect x="1" y="1.5" width="15.5" height="10" rx="2" stroke="#fff" stroke-width="1.3" fill="none"/><rect x="3" y="3.5" width="3" height="6" fill="#fff"/><rect x="17" y="4.5" width="1.8" height="4" rx="0.5" fill="#fff"/></svg>
<div class="a t" style="left:1508.5px;top:860.8px;font-size:12.8px;color:#fff;width:46px;text-align:right">6:59 PM</div>
<div class="a t" style="left:1490.5px;top:877.5px;font-size:12.85px;color:#fff">12/22/2023</div>
<svg class="a" style="left:1563px;top:866px" width="16" height="18" viewBox="0 0 16 18"><path d="M8 1C4.8 1 3 3.5 3 6.5V10.5L1 13.5H15L13 10.5V6.5C13 3.5 11.2 1 8 1Z" fill="#8ad6f2"/><path d="M5.8 15A2.2 2.2 0 0 0 10.2 15Z" fill="#8ad6f2"/></svg>
</body></html>
